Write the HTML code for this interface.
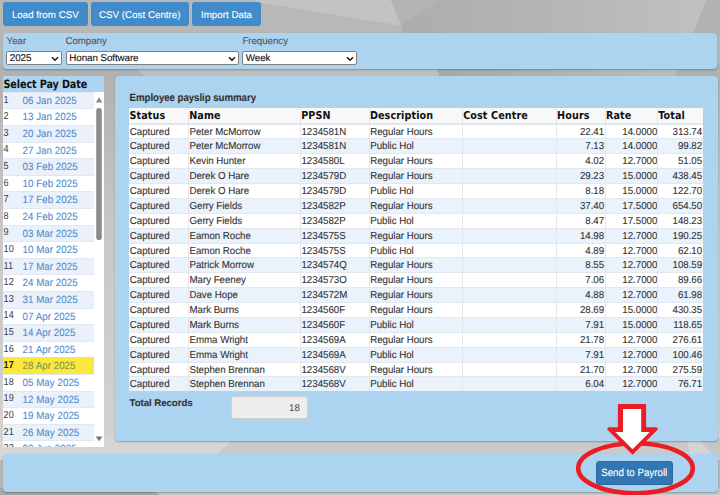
<!DOCTYPE html>
<html><head><meta charset="utf-8"><title>Payroll Import</title>
<style>
*{box-sizing:border-box;margin:0;padding:0}
html,body{width:720px;height:495px;overflow:hidden}
body{position:relative;font-family:"Liberation Sans",Arial,sans-serif;font-size:9.75px;color:#333;background:#b9b9b9;text-rendering:geometricPrecision}
#bg{position:absolute;left:0;top:0;width:720px;height:495px}
.btn{position:absolute;top:2.1px;height:24.3px;background:#418bca;color:#fff;border-radius:3px;font-size:9.75px;line-height:27px;text-align:center;letter-spacing:0.02px}
.panel{position:absolute;background:#acd3f0;border-radius:4px;box-shadow:0 1px 2px rgba(0,0,0,.28)}
.lbl{position:absolute;font-size:9.75px;color:#555;top:2.6px;line-height:12px;letter-spacing:-0.05px}
.dd{position:absolute;top:18.2px;height:14px;background:#fff;border:1px solid #808080;border-radius:2px;font-size:9.85px;line-height:13.2px;color:#111;padding-left:2.6px;letter-spacing:-0.1px}
.dd svg{position:absolute;right:1.5px;top:3.5px}
#dates{position:absolute;left:3px;top:76px;width:101px;height:370.5px;background:#fff;overflow:hidden}
#dates .h{position:absolute;left:0;top:0;width:101px;height:15.8px;background:#acd3f0;font-family:"DejaVu Sans",Verdana,sans-serif;font-weight:bold;font-size:9.65px;line-height:19px;color:#111;padding-left:0.5px;letter-spacing:-0.1px;white-space:nowrap}
.d{position:absolute;left:0;height:16.6px;width:91px;border-top:1px solid #e2e8f1;line-height:17.2px;font-size:9.75px;background:#fff}
.d.a{background:#eaf1fb}
.d.sel{background:#fbe83c;border-top-color:#fbe83c}
.d .n{position:absolute;left:0.6px;top:-1.3px;color:#3a3a3a;font-size:9.1px}
.d.sel .n{font-weight:bold;color:#222}
.d .t{position:absolute;left:19.5px;color:#4d8fd0;letter-spacing:0.04px}
.d.sel .t{color:#7a9a4a}
#sb{position:absolute;left:91px;top:15.8px;width:10px;height:355px;background:#fff}
#tbl{position:absolute;left:128.80px;top:108.0px;width:574.50px;height:283.30px;background:#fff;overflow:hidden}
.th{position:absolute;top:0;height:15.5px;font-family:"DejaVu Sans",Verdana,sans-serif;font-weight:bold;font-size:9.6px;color:#111;line-height:18.8px;padding-left:0.7px;background:#f8f8f8;border-bottom:1px solid #e4e4e4;white-space:nowrap;overflow:hidden;letter-spacing:0.12px}
.tr{position:absolute;left:0;width:100%;border-top:1px solid #e3e8ef;background:#fff}
.tr.a{background:#eaf2fc}
.td{position:absolute;top:0;height:100%;line-height:15.4px;padding-left:1px;white-space:nowrap;overflow:hidden;color:#333;letter-spacing:-0.04px}
.td.r{text-align:right;padding:0 1.2px 0 0}
.td.r0{padding-right:0.2px}
.s{display:inline-block;transform:scaleY(1.04);-webkit-text-stroke:0.1px currentColor}
.s2{display:inline-block;transform:scaleY(1.1)}
.s3{display:inline-block;transform:scaleY(1.12)}
.vl{position:absolute;top:0;width:1px;height:100%;background:#dfe4ea;opacity:.8}
</style></head><body>
<svg id="bg" viewBox="0 0 720 495">
<defs>
<linearGradient id="gTop" gradientUnits="userSpaceOnUse" x1="391" y1="0" x2="706" y2="0"><stop offset="0" stop-color="#acacac"/><stop offset="0.5" stop-color="#b5b5b5"/><stop offset="1" stop-color="#c1c1c1"/></linearGradient>
<linearGradient id="gGap" gradientUnits="userSpaceOnUse" x1="0" y1="70" x2="0" y2="460"><stop offset="0" stop-color="#b1b1b1"/><stop offset="0.42" stop-color="#c8c8c8"/><stop offset="1" stop-color="#d3d3d3"/></linearGradient>
<linearGradient id="gMid" gradientUnits="userSpaceOnUse" x1="437" y1="0" x2="676" y2="0"><stop offset="0" stop-color="#a8a8a8"/><stop offset="1" stop-color="#bdbdbd"/></linearGradient>
</defs>
<rect width="720" height="495" fill="#b8b8b8"/>
<polygon points="255,0 391,0 401,25 398,25 262,3 255,2" fill="#c3c3c3"/>
<polygon points="391,0 720,0 720,36 404,36 401,25" fill="url(#gTop)"/>
<polygon points="391,0 440,0 401,25" fill="#b4b4b4"/>
<polygon points="706,0 720,0 720,36 692,36" fill="#b2b2b2"/>
<polygon points="0,64 131,64 149,80 0,80" fill="#b1b1b1"/>
<polygon points="131,64 435,64 441,80 149,80" fill="#bfbfbf"/>
<polygon points="435,64 677,64 675,80 441,80" fill="url(#gMid)"/>
<polygon points="677,64 720,64 720,80 675,80" fill="#b0b0b0"/>
<rect x="0" y="70" width="4" height="390" fill="url(#gGap)"/>
<rect x="100" y="70" width="20" height="390" fill="url(#gGap)"/>
<rect x="716" y="70" width="4" height="390" fill="url(#gGap)"/>
<rect x="0" y="438" width="720" height="20" fill="#cacaca"/>
<polygon points="0,438 234,438 213,458 0,458" fill="#d6d6d6"/>
<polygon points="687,438 698,438 715,458 690,458" fill="#d4d4d4"/>
<polygon points="698,438 720,438 720,458 715,458" fill="#c6c6c6"/>
<rect x="0" y="488" width="720" height="7" fill="#c9c9c9"/>
<polygon points="0,488 148,488 160,495 0,495" fill="#a9a9a9"/>
</svg>

<div class="btn" style="left:3px;width:84.7px"><span class="s" style="transform:scaleY(1.0)">Load from CSV</span></div>
<div class="btn" style="left:90.6px;width:98.4px"><span class="s" style="transform:scaleY(1.0)">CSV (Cost Centre)</span></div>
<div class="btn" style="left:192.3px;width:68.4px"><span class="s" style="transform:scaleY(1.0)">Import Data</span></div>

<div class="panel" style="left:3px;top:33px;width:714px;height:35.8px">
 <div class="lbl" style="left:3.6px"><span class="s" style="transform:scaleY(1.0)">Year</span></div>
 <div class="lbl" style="left:62.4px"><span class="s" style="transform:scaleY(1.0)">Company</span></div>
 <div class="lbl" style="left:239.4px"><span class="s" style="transform:scaleY(1.0)">Frequency</span></div>
 <div class="dd" style="left:3.2px;width:55.6px"><span class="s" style="transform:scaleY(1.0)">2025</span><svg width="8" height="6" viewBox="0 0 8 6"><path d="M1 1.2 L4 4.2 L7 1.2" fill="none" stroke="#111" stroke-width="1.4"/></svg></div>
 <div class="dd" style="left:62.7px;width:173px"><span class="s" style="transform:scaleY(1.0)">Honan Software</span><svg width="8" height="6" viewBox="0 0 8 6"><path d="M1 1.2 L4 4.2 L7 1.2" fill="none" stroke="#111" stroke-width="1.4"/></svg></div>
 <div class="dd" style="left:239.2px;width:114.6px"><span class="s" style="transform:scaleY(1.0)">Week</span><svg width="8" height="6" viewBox="0 0 8 6"><path d="M1 1.2 L4 4.2 L7 1.2" fill="none" stroke="#111" stroke-width="1.4"/></svg></div>
</div>

<div id="dates">
 <div class="h"><span class="s2" style="transform:scaleY(1.19)">Select Pay Date</span></div>
 <div class="d a" style="top:15.80px"><span class="n"><span class="s3">1</span></span><span class="t"><span class="s" style="transform:scaleY(1.08)">06 Jan 2025</span></span></div>
<div class="d " style="top:32.40px"><span class="n"><span class="s3">2</span></span><span class="t"><span class="s" style="transform:scaleY(1.08)">13 Jan 2025</span></span></div>
<div class="d a" style="top:49.00px"><span class="n"><span class="s3">3</span></span><span class="t"><span class="s" style="transform:scaleY(1.08)">20 Jan 2025</span></span></div>
<div class="d " style="top:65.60px"><span class="n"><span class="s3">4</span></span><span class="t"><span class="s" style="transform:scaleY(1.08)">27 Jan 2025</span></span></div>
<div class="d a" style="top:82.20px"><span class="n"><span class="s3">5</span></span><span class="t"><span class="s" style="transform:scaleY(1.08)">03 Feb 2025</span></span></div>
<div class="d " style="top:98.80px"><span class="n"><span class="s3">6</span></span><span class="t"><span class="s" style="transform:scaleY(1.08)">10 Feb 2025</span></span></div>
<div class="d a" style="top:115.40px"><span class="n"><span class="s3">7</span></span><span class="t"><span class="s" style="transform:scaleY(1.08)">17 Feb 2025</span></span></div>
<div class="d " style="top:132.00px"><span class="n"><span class="s3">8</span></span><span class="t"><span class="s" style="transform:scaleY(1.08)">24 Feb 2025</span></span></div>
<div class="d a" style="top:148.60px"><span class="n"><span class="s3">9</span></span><span class="t"><span class="s" style="transform:scaleY(1.08)">03 Mar 2025</span></span></div>
<div class="d " style="top:165.20px"><span class="n"><span class="s3">10</span></span><span class="t"><span class="s" style="transform:scaleY(1.08)">10 Mar 2025</span></span></div>
<div class="d a" style="top:181.80px"><span class="n"><span class="s3">11</span></span><span class="t"><span class="s" style="transform:scaleY(1.08)">17 Mar 2025</span></span></div>
<div class="d " style="top:198.40px"><span class="n"><span class="s3">12</span></span><span class="t"><span class="s" style="transform:scaleY(1.08)">24 Mar 2025</span></span></div>
<div class="d a" style="top:215.00px"><span class="n"><span class="s3">13</span></span><span class="t"><span class="s" style="transform:scaleY(1.08)">31 Mar 2025</span></span></div>
<div class="d " style="top:231.60px"><span class="n"><span class="s3">14</span></span><span class="t"><span class="s" style="transform:scaleY(1.08)">07 Apr 2025</span></span></div>
<div class="d a" style="top:248.20px"><span class="n"><span class="s3">15</span></span><span class="t"><span class="s" style="transform:scaleY(1.08)">14 Apr 2025</span></span></div>
<div class="d " style="top:264.80px"><span class="n"><span class="s3">16</span></span><span class="t"><span class="s" style="transform:scaleY(1.08)">21 Apr 2025</span></span></div>
<div class="d a sel" style="top:281.40px"><span class="n"><span class="s3">17</span></span><span class="t"><span class="s" style="transform:scaleY(1.08)">28 Apr 2025</span></span></div>
<div class="d " style="top:298.00px"><span class="n"><span class="s3">18</span></span><span class="t"><span class="s" style="transform:scaleY(1.08)">05 May 2025</span></span></div>
<div class="d a" style="top:314.60px"><span class="n"><span class="s3">19</span></span><span class="t"><span class="s" style="transform:scaleY(1.08)">12 May 2025</span></span></div>
<div class="d " style="top:331.20px"><span class="n"><span class="s3">20</span></span><span class="t"><span class="s" style="transform:scaleY(1.08)">19 May 2025</span></span></div>
<div class="d a" style="top:347.80px"><span class="n"><span class="s3">21</span></span><span class="t"><span class="s" style="transform:scaleY(1.08)">26 May 2025</span></span></div>
<div class="d " style="top:364.40px"><span class="n"><span class="s3">22</span></span><span class="t"><span class="s" style="transform:scaleY(1.08)">02 Jun 2025</span></span></div>

 <div id="sb">
  <svg width="10" height="355" viewBox="0 0 10 355"><polygon points="1.8,10.6 8.4,10.6 5.1,5.2" fill="#8c8c8c"/><rect x="2.2" y="16" width="5.6" height="132" rx="2.8" fill="#8c8c8c"/><polygon points="1.8,344.5 8.4,344.5 5.1,349.2" fill="#757575"/></svg>
 </div>
</div>

<div class="panel" style="left:115px;top:76px;width:603px;height:365px"></div>
<div style="position:absolute;left:129.5px;top:92.6px;font-weight:bold;font-size:9.75px;line-height:12px;color:#333;letter-spacing:-0.08px;white-space:nowrap"><span class="s" style="transform:scaleY(1.08)">Employee payslip summary</span></div>
<div id="tbl">
 <div class="th" style="left:0.00px;width:59.70px"><span class="s2" style="transform:scaleY(1.13)">Status</span></div><div class="th" style="left:59.70px;width:112.00px"><span class="s2" style="transform:scaleY(1.13)">Name</span></div><div class="th" style="left:171.70px;width:68.70px"><span class="s2" style="transform:scaleY(1.13)">PPSN</span></div><div class="th" style="left:240.40px;width:93.30px"><span class="s2" style="transform:scaleY(1.13)">Description</span></div><div class="th" style="left:333.70px;width:93.90px"><span class="s2" style="transform:scaleY(1.13)">Cost Centre</span></div><div class="th" style="left:427.60px;width:48.90px"><span class="s2" style="transform:scaleY(1.13)">Hours</span></div><div class="th" style="left:476.50px;width:52.20px"><span class="s2" style="transform:scaleY(1.13)">Rate</span></div><div class="th" style="left:528.70px;width:45.80px"><span class="s2" style="transform:scaleY(1.13)">Total</span></div>
 <div class="tr" style="top:15.50px;height:14.878px"><span class="td" style="left:0.00px;width:59.70px"><span class="s">Captured</span></span><span class="td" style="left:59.70px;width:112.00px"><span class="s">Peter McMorrow</span></span><span class="td" style="left:171.70px;width:68.70px"><span class="s">1234581N</span></span><span class="td" style="left:240.40px;width:93.30px"><span class="s">Regular Hours</span></span><span class="td" style="left:333.70px;width:93.90px"></span><span class="td r" style="left:427.60px;width:48.90px"><span class="s">22.41</span></span><span class="td r r0" style="left:476.50px;width:52.20px"><span class="s">14.0000</span></span><span class="td r" style="left:528.70px;width:45.80px"><span class="s">313.74</span></span></div>
<div class="tr a" style="top:30.38px;height:14.878px"><span class="td" style="left:0.00px;width:59.70px"><span class="s">Captured</span></span><span class="td" style="left:59.70px;width:112.00px"><span class="s">Peter McMorrow</span></span><span class="td" style="left:171.70px;width:68.70px"><span class="s">1234581N</span></span><span class="td" style="left:240.40px;width:93.30px"><span class="s">Public Hol</span></span><span class="td" style="left:333.70px;width:93.90px"></span><span class="td r" style="left:427.60px;width:48.90px"><span class="s">7.13</span></span><span class="td r r0" style="left:476.50px;width:52.20px"><span class="s">14.0000</span></span><span class="td r" style="left:528.70px;width:45.80px"><span class="s">99.82</span></span></div>
<div class="tr" style="top:45.26px;height:14.878px"><span class="td" style="left:0.00px;width:59.70px"><span class="s">Captured</span></span><span class="td" style="left:59.70px;width:112.00px"><span class="s">Kevin Hunter</span></span><span class="td" style="left:171.70px;width:68.70px"><span class="s">1234580L</span></span><span class="td" style="left:240.40px;width:93.30px"><span class="s">Regular Hours</span></span><span class="td" style="left:333.70px;width:93.90px"></span><span class="td r" style="left:427.60px;width:48.90px"><span class="s">4.02</span></span><span class="td r r0" style="left:476.50px;width:52.20px"><span class="s">12.7000</span></span><span class="td r" style="left:528.70px;width:45.80px"><span class="s">51.05</span></span></div>
<div class="tr a" style="top:60.13px;height:14.878px"><span class="td" style="left:0.00px;width:59.70px"><span class="s">Captured</span></span><span class="td" style="left:59.70px;width:112.00px"><span class="s">Derek O Hare</span></span><span class="td" style="left:171.70px;width:68.70px"><span class="s">1234579D</span></span><span class="td" style="left:240.40px;width:93.30px"><span class="s">Regular Hours</span></span><span class="td" style="left:333.70px;width:93.90px"></span><span class="td r" style="left:427.60px;width:48.90px"><span class="s">29.23</span></span><span class="td r r0" style="left:476.50px;width:52.20px"><span class="s">15.0000</span></span><span class="td r" style="left:528.70px;width:45.80px"><span class="s">438.45</span></span></div>
<div class="tr" style="top:75.01px;height:14.878px"><span class="td" style="left:0.00px;width:59.70px"><span class="s">Captured</span></span><span class="td" style="left:59.70px;width:112.00px"><span class="s">Derek O Hare</span></span><span class="td" style="left:171.70px;width:68.70px"><span class="s">1234579D</span></span><span class="td" style="left:240.40px;width:93.30px"><span class="s">Public Hol</span></span><span class="td" style="left:333.70px;width:93.90px"></span><span class="td r" style="left:427.60px;width:48.90px"><span class="s">8.18</span></span><span class="td r r0" style="left:476.50px;width:52.20px"><span class="s">15.0000</span></span><span class="td r" style="left:528.70px;width:45.80px"><span class="s">122.70</span></span></div>
<div class="tr a" style="top:89.89px;height:14.878px"><span class="td" style="left:0.00px;width:59.70px"><span class="s">Captured</span></span><span class="td" style="left:59.70px;width:112.00px"><span class="s">Gerry Fields</span></span><span class="td" style="left:171.70px;width:68.70px"><span class="s">1234582P</span></span><span class="td" style="left:240.40px;width:93.30px"><span class="s">Regular Hours</span></span><span class="td" style="left:333.70px;width:93.90px"></span><span class="td r" style="left:427.60px;width:48.90px"><span class="s">37.40</span></span><span class="td r r0" style="left:476.50px;width:52.20px"><span class="s">17.5000</span></span><span class="td r" style="left:528.70px;width:45.80px"><span class="s">654.50</span></span></div>
<div class="tr" style="top:104.77px;height:14.878px"><span class="td" style="left:0.00px;width:59.70px"><span class="s">Captured</span></span><span class="td" style="left:59.70px;width:112.00px"><span class="s">Gerry Fields</span></span><span class="td" style="left:171.70px;width:68.70px"><span class="s">1234582P</span></span><span class="td" style="left:240.40px;width:93.30px"><span class="s">Public Hol</span></span><span class="td" style="left:333.70px;width:93.90px"></span><span class="td r" style="left:427.60px;width:48.90px"><span class="s">8.47</span></span><span class="td r r0" style="left:476.50px;width:52.20px"><span class="s">17.5000</span></span><span class="td r" style="left:528.70px;width:45.80px"><span class="s">148.23</span></span></div>
<div class="tr a" style="top:119.64px;height:14.878px"><span class="td" style="left:0.00px;width:59.70px"><span class="s">Captured</span></span><span class="td" style="left:59.70px;width:112.00px"><span class="s">Eamon Roche</span></span><span class="td" style="left:171.70px;width:68.70px"><span class="s">1234575S</span></span><span class="td" style="left:240.40px;width:93.30px"><span class="s">Regular Hours</span></span><span class="td" style="left:333.70px;width:93.90px"></span><span class="td r" style="left:427.60px;width:48.90px"><span class="s">14.98</span></span><span class="td r r0" style="left:476.50px;width:52.20px"><span class="s">12.7000</span></span><span class="td r" style="left:528.70px;width:45.80px"><span class="s">190.25</span></span></div>
<div class="tr" style="top:134.52px;height:14.878px"><span class="td" style="left:0.00px;width:59.70px"><span class="s">Captured</span></span><span class="td" style="left:59.70px;width:112.00px"><span class="s">Eamon Roche</span></span><span class="td" style="left:171.70px;width:68.70px"><span class="s">1234575S</span></span><span class="td" style="left:240.40px;width:93.30px"><span class="s">Public Hol</span></span><span class="td" style="left:333.70px;width:93.90px"></span><span class="td r" style="left:427.60px;width:48.90px"><span class="s">4.89</span></span><span class="td r r0" style="left:476.50px;width:52.20px"><span class="s">12.7000</span></span><span class="td r" style="left:528.70px;width:45.80px"><span class="s">62.10</span></span></div>
<div class="tr a" style="top:149.40px;height:14.878px"><span class="td" style="left:0.00px;width:59.70px"><span class="s">Captured</span></span><span class="td" style="left:59.70px;width:112.00px"><span class="s">Patrick Morrow</span></span><span class="td" style="left:171.70px;width:68.70px"><span class="s">1234574Q</span></span><span class="td" style="left:240.40px;width:93.30px"><span class="s">Regular Hours</span></span><span class="td" style="left:333.70px;width:93.90px"></span><span class="td r" style="left:427.60px;width:48.90px"><span class="s">8.55</span></span><span class="td r r0" style="left:476.50px;width:52.20px"><span class="s">12.7000</span></span><span class="td r" style="left:528.70px;width:45.80px"><span class="s">108.59</span></span></div>
<div class="tr" style="top:164.28px;height:14.878px"><span class="td" style="left:0.00px;width:59.70px"><span class="s">Captured</span></span><span class="td" style="left:59.70px;width:112.00px"><span class="s">Mary Feeney</span></span><span class="td" style="left:171.70px;width:68.70px"><span class="s">1234573O</span></span><span class="td" style="left:240.40px;width:93.30px"><span class="s">Regular Hours</span></span><span class="td" style="left:333.70px;width:93.90px"></span><span class="td r" style="left:427.60px;width:48.90px"><span class="s">7.06</span></span><span class="td r r0" style="left:476.50px;width:52.20px"><span class="s">12.7000</span></span><span class="td r" style="left:528.70px;width:45.80px"><span class="s">89.66</span></span></div>
<div class="tr a" style="top:179.16px;height:14.878px"><span class="td" style="left:0.00px;width:59.70px"><span class="s">Captured</span></span><span class="td" style="left:59.70px;width:112.00px"><span class="s">Dave Hope</span></span><span class="td" style="left:171.70px;width:68.70px"><span class="s">1234572M</span></span><span class="td" style="left:240.40px;width:93.30px"><span class="s">Regular Hours</span></span><span class="td" style="left:333.70px;width:93.90px"></span><span class="td r" style="left:427.60px;width:48.90px"><span class="s">4.88</span></span><span class="td r r0" style="left:476.50px;width:52.20px"><span class="s">12.7000</span></span><span class="td r" style="left:528.70px;width:45.80px"><span class="s">61.98</span></span></div>
<div class="tr" style="top:194.03px;height:14.878px"><span class="td" style="left:0.00px;width:59.70px"><span class="s">Captured</span></span><span class="td" style="left:59.70px;width:112.00px"><span class="s">Mark Burns</span></span><span class="td" style="left:171.70px;width:68.70px"><span class="s">1234560F</span></span><span class="td" style="left:240.40px;width:93.30px"><span class="s">Regular Hours</span></span><span class="td" style="left:333.70px;width:93.90px"></span><span class="td r" style="left:427.60px;width:48.90px"><span class="s">28.69</span></span><span class="td r r0" style="left:476.50px;width:52.20px"><span class="s">15.0000</span></span><span class="td r" style="left:528.70px;width:45.80px"><span class="s">430.35</span></span></div>
<div class="tr a" style="top:208.91px;height:14.878px"><span class="td" style="left:0.00px;width:59.70px"><span class="s">Captured</span></span><span class="td" style="left:59.70px;width:112.00px"><span class="s">Mark Burns</span></span><span class="td" style="left:171.70px;width:68.70px"><span class="s">1234560F</span></span><span class="td" style="left:240.40px;width:93.30px"><span class="s">Public Hol</span></span><span class="td" style="left:333.70px;width:93.90px"></span><span class="td r" style="left:427.60px;width:48.90px"><span class="s">7.91</span></span><span class="td r r0" style="left:476.50px;width:52.20px"><span class="s">15.0000</span></span><span class="td r" style="left:528.70px;width:45.80px"><span class="s">118.65</span></span></div>
<div class="tr" style="top:223.79px;height:14.878px"><span class="td" style="left:0.00px;width:59.70px"><span class="s">Captured</span></span><span class="td" style="left:59.70px;width:112.00px"><span class="s">Emma Wright</span></span><span class="td" style="left:171.70px;width:68.70px"><span class="s">1234569A</span></span><span class="td" style="left:240.40px;width:93.30px"><span class="s">Regular Hours</span></span><span class="td" style="left:333.70px;width:93.90px"></span><span class="td r" style="left:427.60px;width:48.90px"><span class="s">21.78</span></span><span class="td r r0" style="left:476.50px;width:52.20px"><span class="s">12.7000</span></span><span class="td r" style="left:528.70px;width:45.80px"><span class="s">276.61</span></span></div>
<div class="tr a" style="top:238.67px;height:14.878px"><span class="td" style="left:0.00px;width:59.70px"><span class="s">Captured</span></span><span class="td" style="left:59.70px;width:112.00px"><span class="s">Emma Wright</span></span><span class="td" style="left:171.70px;width:68.70px"><span class="s">1234569A</span></span><span class="td" style="left:240.40px;width:93.30px"><span class="s">Public Hol</span></span><span class="td" style="left:333.70px;width:93.90px"></span><span class="td r" style="left:427.60px;width:48.90px"><span class="s">7.91</span></span><span class="td r r0" style="left:476.50px;width:52.20px"><span class="s">12.7000</span></span><span class="td r" style="left:528.70px;width:45.80px"><span class="s">100.46</span></span></div>
<div class="tr" style="top:253.54px;height:14.878px"><span class="td" style="left:0.00px;width:59.70px"><span class="s">Captured</span></span><span class="td" style="left:59.70px;width:112.00px"><span class="s">Stephen Brennan</span></span><span class="td" style="left:171.70px;width:68.70px"><span class="s">1234568V</span></span><span class="td" style="left:240.40px;width:93.30px"><span class="s">Regular Hours</span></span><span class="td" style="left:333.70px;width:93.90px"></span><span class="td r" style="left:427.60px;width:48.90px"><span class="s">21.70</span></span><span class="td r r0" style="left:476.50px;width:52.20px"><span class="s">12.7000</span></span><span class="td r" style="left:528.70px;width:45.80px"><span class="s">275.59</span></span></div>
<div class="tr a" style="top:268.42px;height:14.878px"><span class="td" style="left:0.00px;width:59.70px"><span class="s">Captured</span></span><span class="td" style="left:59.70px;width:112.00px"><span class="s">Stephen Brennan</span></span><span class="td" style="left:171.70px;width:68.70px"><span class="s">1234568V</span></span><span class="td" style="left:240.40px;width:93.30px"><span class="s">Public Hol</span></span><span class="td" style="left:333.70px;width:93.90px"></span><span class="td r" style="left:427.60px;width:48.90px"><span class="s">6.04</span></span><span class="td r r0" style="left:476.50px;width:52.20px"><span class="s">12.7000</span></span><span class="td r" style="left:528.70px;width:45.80px"><span class="s">76.71</span></span></div>

 <div class="vl" style="left:59.20px"></div><div class="vl" style="left:171.20px"></div><div class="vl" style="left:239.90px"></div><div class="vl" style="left:333.20px"></div><div class="vl" style="left:427.10px"></div><div class="vl" style="left:476.00px"></div><div class="vl" style="left:528.20px"></div>
</div>
<div style="position:absolute;left:129.6px;top:397.5px;font-weight:bold;font-size:9.75px;line-height:12px;color:#333;letter-spacing:-0.1px;white-space:nowrap"><span class="s" style="transform:scaleY(1.0)">Total Records</span></div>
<div style="position:absolute;left:230.7px;top:395.9px;width:77.8px;height:23.3px;background:#eee;border:1px solid #d0d0d0;border-radius:3px;font-size:9.75px;color:#555;text-align:right;line-height:23.6px;padding-right:7.6px"><span class="s" style="transform:scaleY(1.0)">18</span></div>

<div class="panel" style="left:3px;top:453.7px;width:714.5px;height:38.2px"></div>
<div style="position:absolute;left:596.3px;top:460.8px;width:76.6px;height:24.2px;background:#3277b3;border:1px solid #2c6aa0;border-radius:3px;color:#fff;font-size:9.75px;line-height:24.6px;text-align:center;letter-spacing:0;padding-right:0.8px"><span class="s" style="transform:scaleY(1.08)">Send to Payroll</span></div>

<svg style="position:absolute;left:0;top:0" width="720" height="495" viewBox="0 0 720 495">
<ellipse cx="635.5" cy="468.2" rx="57.3" ry="25" fill="none" stroke="#ea1c24" stroke-width="4.6"/>
<polygon points="618.6,404 645.4,404 646.1,404.7 646.1,427.3 656.5,427.3 658,429.3 632.5,454.8 607,429.3 608.5,427.3 617.9,427.3 617.9,404.7" fill="#ea1c24"/>
<polygon points="623,409.1 641.2,409.1 641.2,432.1 649.8,432.1 632.5,449.3 615.2,432.1 623,432.1" fill="#fff"/>
</svg>
</body></html>
